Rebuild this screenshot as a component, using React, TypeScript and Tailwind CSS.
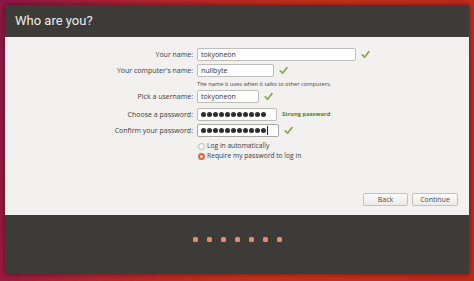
import React from 'react';

const font = { fontFamily: '"Open Sans", "Noto Sans", sans-serif' };

const Check: React.FC = () => (
  <svg width="9" height="9" viewBox="0 0 10 10" className="shrink-0">
    <path d="M1.5 5.5 L4 8 L8.8 1.8" fill="none" stroke="#8cae4c" strokeWidth="2" strokeLinecap="round" strokeLinejoin="round" />
  </svg>
);

const Dots: React.FC<{ n: number }> = ({ n }) => (
  <div className="flex gap-[1px] items-center">
    {Array.from({ length: n }).map((_, i) => (
      <span key={i} className="w-[5px] h-[5px] rounded-full bg-[#2e2e2e]" />
    ))}
  </div>
);

const Field: React.FC<{ w: string; children: React.ReactNode; focus?: boolean }> = ({ w, children, focus }) => (
  <div
    className={`${w} h-[13px] bg-white border ${focus ? 'border-[#a8a8a4]' : 'border-[#bdbdb9]'} rounded-[2px] flex items-center px-[3px] text-[7px] text-[#333] leading-none`}
  >
    {children}
  </div>
);

const Row: React.FC<{ label: string; children: React.ReactNode; className?: string }> = ({ label, children, className }) => (
  <div className={`flex items-center ${className ?? ''}`}>
    <div className="w-[192px] text-right pr-[4px] text-[7px] text-[#3c3c3c] leading-none">{label}</div>
    <div className="flex items-center gap-[5px]">{children}</div>
  </div>
);

export default function App() {
  return (
    <div
      className="w-[474px] h-[281px] overflow-hidden pl-[5px] pt-[5px] bg-[linear-gradient(100deg,#8e1648_0%,#b5262e_30%,#c5321a_60%,#c02a1e_100%)]"
      style={font}
    >
      <div className="w-[464px] shadow-[0_0_6px_rgba(0,0,0,0.5)]">
        {/* header */}
        <div className="h-[32px] bg-[#3c3b37] flex items-center pl-[10px]">
          <span className="font-['Roboto',sans-serif] text-[13px] text-[#ececec]">Who are you?</span>
        </div>

        {/* content */}
        <div className="h-[178px] bg-[#f2f1f0] pt-[11px] flex flex-col">
          <Row label="Your name:">
            <Field w="w-[159px]">tokyoneon</Field>
            <Check />
          </Row>
          <Row label="Your computer's name:" className="mt-[3px]">
            <Field w="w-[77px]">nullbyte</Field>
            <Check />
          </Row>
          <div className="pl-[192px] mt-[3px] text-[5.7px] text-[#444] leading-[9px]">
            The name it uses when it talks to other computers.
          </div>
          <Row label="Pick a username:" className="mt-[1px]">
            <Field w="w-[62px]">tokyoneon</Field>
            <Check />
          </Row>
          <Row label="Choose a password:" className="mt-[5px]">
            <Field w="w-[80px]">
              <Dots n={11} />
            </Field>
            <span className="text-[5.8px] font-bold text-[#3d8a2c] leading-none">Strong password</span>
          </Row>
          <Row label="Confirm your password:" className="mt-[3px]">
            <Field w="w-[82px]" focus>
              <Dots n={11} />
              <span className="w-[1px] h-[9px] bg-[#222] ml-[1px]" />
            </Field>
            <Check />
          </Row>
          <div className="pl-[193px] mt-[5px] flex flex-col gap-[2px] text-[6.7px] text-[#3c3c3c] leading-[8px]">
            <div className="flex items-center gap-[2px]">
              <span className="w-[7px] h-[7px] rounded-full border border-[#b5b5b2] bg-[#fbfbfb]" />
              <span>Log in automatically</span>
            </div>
            <div className="flex items-center gap-[2px]">
              <span className="w-[7px] h-[7px] rounded-full bg-[#e2663c] flex items-center justify-center">
                <span className="w-[3px] h-[3px] rounded-full bg-[#f6e0d4]" />
              </span>
              <span>Require my password to log in</span>
            </div>
          </div>
          <div className="flex-1" />
          <div className="flex justify-end gap-[4px] pr-[11px] pb-[9px]">
            <button className="w-[45px] h-[13px] rounded-[2px] border border-[#c2c2be] bg-[linear-gradient(#fbfbfa,#ecebea)] text-[7px] text-[#4a4a4a] leading-none">
              Back
            </button>
            <button className="w-[46px] h-[13px] rounded-[2px] border border-[#c2c2be] bg-[linear-gradient(#fbfbfa,#ecebea)] text-[7px] text-[#4a4a4a] leading-none">
              Continue
            </button>
          </div>
        </div>

        {/* footer */}
        <div className="h-[59px] bg-[#3c3b37] flex items-start justify-center pt-[22px] pl-[1px]">
          <div className="flex gap-[9px]">
            {Array.from({ length: 7 }).map((_, i) => (
              <span key={i} className="w-[5px] h-[5px] rounded-[1.5px] bg-[#e88c64]" />
            ))}
          </div>
        </div>
      </div>
    </div>
  );
}
